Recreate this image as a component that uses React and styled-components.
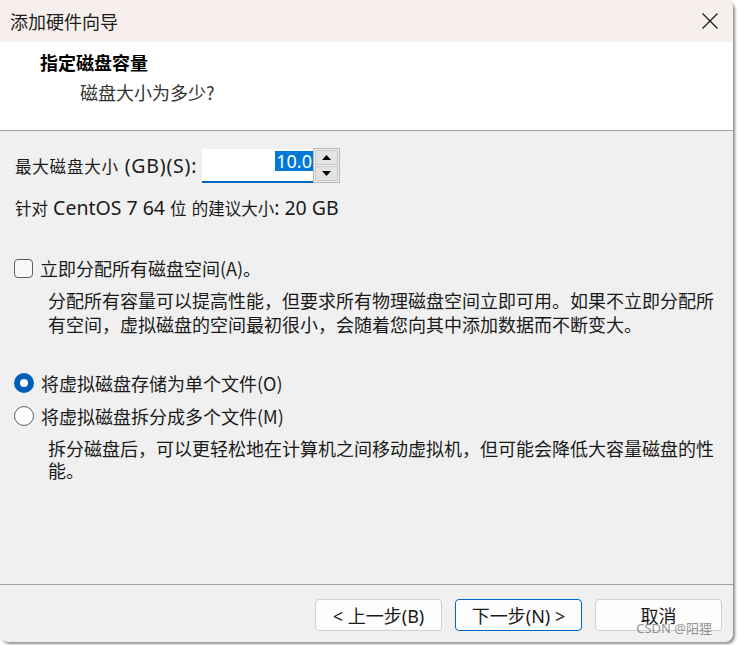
import React from "react";
import styled, { createGlobalStyle } from "styled-components";

const Global = createGlobalStyle`
  html, body { margin: 0; padding: 0; background: #ffffff; }
  body { width: 738px; height: 645px; overflow: hidden; font-family: "Noto Sans", "Noto Sans CJK SC", sans-serif; }
  #root { width: 738px; height: 645px; }
`;

const Window = styled.div`
  position: relative;
  width: 733px;
  height: 642px;
  background: #f0f0f0;
  border-radius: 0 8px 8px 8px;
  overflow: hidden;
  box-shadow: 2px 2px 3px rgba(0, 0, 0, 0.45);
  display: flex;
  flex-direction: column;
  color: #000;
`;

const TitleBar = styled.div`
  height: 42px;
  flex: none;
  background: #f7efed;
  display: flex;
  align-items: center;
  justify-content: space-between;
  padding: 0 12px 0 10px;
  font-family: "Noto Sans CJK SC", sans-serif;
  font-size: 18px;
  color: #1b1b1b;
`;

const CloseBtn = styled.div`
  width: 22px;
  height: 22px;
  display: flex;
  align-items: center;
  justify-content: center;
`;

const Header = styled.div`
  height: 89px;
  flex: none;
  background: #ffffff;
  border-bottom: 1px solid #a0a0a0;
  padding: 8px 0 0 40px;
  box-sizing: border-box;
  font-family: "Noto Sans CJK SC", serif;
`;

const HeadTitle = styled.div`
  font-size: 18px;
  font-weight: 700;
  line-height: 24px;
  height: 24px;
`;

const HeadSub = styled.div`
  font-size: 18px;
  line-height: 24px;
  margin-top: 6px;
  padding-left: 40px;
  color: #333;
`;

const Body = styled.div`
  flex: 1;
  display: flex;
  flex-direction: column;
  padding: 17px 0 0 15px;
  border-bottom: 1px solid #a0a0a0;
`;

const SizeRow = styled.div`
  display: flex;
  align-items: center;
  height: 35px;
`;

const Label = styled.span`
  font-family: "Noto Sans", "Noto Sans CJK SC", sans-serif;
  font-size: 19.5px;
  color: #1a1a1a;
  white-space: pre;
  letter-spacing: ${(p) => (p.$spread ? "0.8px" : "0")};
  width: ${(p) => (p.$w ? `${p.$w}px` : "auto")};
  flex: none;
`;

const Han = styled.span`
  font-family: "Noto Sans CJK SC", sans-serif;
  font-size: 16.5px;
`;

const Input = styled.div`
  width: 111px;
  height: 34px;
  box-sizing: border-box;
  background: #fff;
  border-bottom: 2px solid #0067c0;
  display: flex;
  align-items: center;
  justify-content: flex-end;
  padding-top: 1px;
`;

const Selected = styled.span`
  background: #0078d7;
  color: #fff;
  font-family: "Noto Sans", sans-serif;
  font-size: 18px;
  line-height: 20px;
  padding: 0 1px;
  margin-bottom: 9px;
`;

const Spinner = styled.div`
  width: 27px;
  height: 35px;
  box-sizing: border-box;
  border: 1px solid #b9b9b9;
  display: flex;
  flex-direction: column;
  gap: 1px;
  padding: 1px;
  background: #f0f0f0;
`;

const SpinBtn = styled.div`
  flex: 1;
  background: #e3e3e3;
  border: 1px solid #c8c8c8;
  display: flex;
  align-items: center;
  justify-content: center;
`;

const Recommend = styled.div`
  margin-top: 13px;
  height: 24px;
  line-height: 24px;
`;

const Option = styled.label`
  display: flex;
  align-items: center;
  gap: 7px;
  height: 24px;
  margin-top: ${(p) => p.$top}px;
  margin-left: -1px;
  font-family: "Noto Sans CJK SC", sans-serif;
  font-size: 18px;
  color: #1a1a1a;
`;

const CheckBox = styled.span`
  width: 17px;
  height: 17px;
  border: 1.5px solid #5f5f5f;
  border-radius: 4px;
  background: #f7f7f7;
  flex: none;
`;

const Radio = styled.span`
  width: 20px;
  height: 20px;
  box-sizing: border-box;
  border-radius: 50%;
  flex: none;
  border: ${(p) => (p.$on ? "6px solid #005fb8" : "1.5px solid #5f5f5f")};
  background: #fff;
`;

const Desc = styled.div`
  margin-top: ${(p) => p.$top}px;
  padding-left: 33px;
  width: 670px;
  font-family: "Noto Sans CJK SC", sans-serif;
  font-size: 18px;
  line-height: ${(p) => p.$lh || 24}px;
  color: #1a1a1a;
`;

const Footer = styled.div`
  height: 57px;
  flex: none;
  display: flex;
  justify-content: flex-end;
  align-items: flex-start;
  gap: 13px;
  padding: 14px 11px 0 0;
  box-sizing: border-box;
`;

const Button = styled.div`
  width: 127px;
  height: 32px;
  box-sizing: border-box;
  border: 1px solid ${(p) => (p.$focus ? "#0067c0" : "#d0d0d0")};
  border-radius: 4px;
  background: #fdfdfd;
  display: flex;
  align-items: center;
  justify-content: center;
  font-family: "Noto Sans", "Noto Sans CJK SC", sans-serif;
  font-size: 18px;
  color: #1a1a1a;
`;

const Watermark = styled.div`
  position: absolute;
  right: 21px;
  bottom: 5px;
  font-family: "Noto Sans", "Noto Sans CJK SC", sans-serif;
  font-size: 13px;
  color: rgba(110, 110, 110, 0.75);
`;

export default function App() {
  return (
    <>
      <Global />
      <Window>
        <TitleBar>
          <span>添加硬件向导</span>
          <CloseBtn>
            <svg width="18" height="18" viewBox="0 0 18 18">
              <path d="M1.5 1.5 L16.5 16.5 M16.5 1.5 L1.5 16.5" stroke="#1a1a1a" strokeWidth="1.3" fill="none" />
            </svg>
          </CloseBtn>
        </TitleBar>
        <Header>
          <HeadTitle>指定磁盘容量</HeadTitle>
          <HeadSub>磁盘大小为多少?</HeadSub>
        </Header>
        <Body>
          <SizeRow>
            <Label $w={187} $spread>
              <Han>最大磁盘大小</Han> (GB)(S):
            </Label>
            <Input>
              <Selected>10.0</Selected>
            </Input>
            <Spinner>
              <SpinBtn>
                <svg width="9" height="5" viewBox="0 0 9 5"><path d="M0 5 L4.5 0 L9 5 Z" fill="#000" /></svg>
              </SpinBtn>
              <SpinBtn>
                <svg width="9" height="5" viewBox="0 0 9 5"><path d="M0 0 L4.5 5 L9 0 Z" fill="#000" /></svg>
              </SpinBtn>
            </Spinner>
          </SizeRow>
          <Recommend>
            <Label>
              <Han>针对</Han> CentOS 7 64 <Han>位</Han> <Han>的建议大小</Han>: 20 GB
            </Label>
          </Recommend>
          <Option $top={36}>
            <CheckBox />
            <span>立即分配所有磁盘空间(A)。</span>
          </Option>
          <Desc $top={8}>
            分配所有容量可以提高性能，但要求所有物理磁盘空间立即可用。如果不立即分配所有空间，虚拟磁盘的空间最初很小，会随着您向其中添加数据而不断变大。
          </Desc>
          <Option $top={35}>
            <Radio $on />
            <span>将虚拟磁盘存储为单个文件(O)</span>
          </Option>
          <Option $top={9}>
            <Radio />
            <span>将虚拟磁盘拆分成多个文件(M)</span>
          </Option>
          <Desc $top={9} $lh={22}>
            拆分磁盘后，可以更轻松地在计算机之间移动虚拟机，但可能会降低大容量磁盘的性能。
          </Desc>
        </Body>
        <Footer>
          <Button>&lt; 上一步(B)</Button>
          <Button $focus>下一步(N) &gt;</Button>
          <Button>取消</Button>
        </Footer>
        <Watermark>CSDN @阳狸</Watermark>
      </Window>
    </>
  );
}
